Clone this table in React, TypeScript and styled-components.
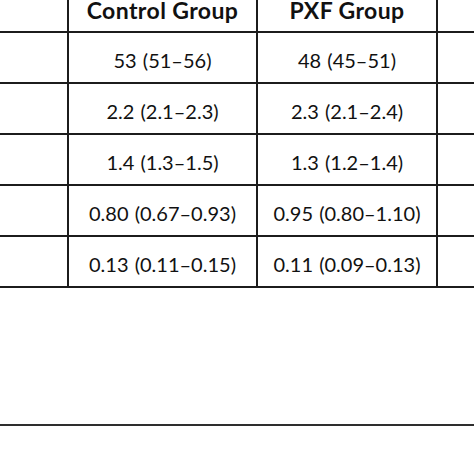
import styled, { createGlobalStyle } from 'styled-components';

const GlobalStyle = createGlobalStyle`
  html, body {
    margin: 0;
    padding: 0;
    background: #ffffff;
    overflow: hidden;
  }
  body {
    font-family: 'Lato', 'Open Sans', sans-serif;
    color: #111111;
  }
`;

const rows = [
  ['53 (51–56)', '48 (45–51)'],
  ['2.2 (2.1–2.3)', '2.3 (2.1–2.4)'],
  ['1.4 (1.3–1.5)', '1.3 (1.2–1.4)'],
  ['0.80 (0.67–0.93)', '0.95 (0.80–1.10)'],
  ['0.13 (0.11–0.15)', '0.11 (0.09–0.13)'],
];

const Page = styled.div`
  width: 474px;
  height: 474px;
  overflow: hidden;
  display: flex;
  flex-direction: column;
`;

const Table = styled.table`
  width: 474px;
  margin-top: -20px;
  border-collapse: collapse;
  table-layout: fixed;
`;

const HeadCell = styled.th<{ $w: number }>`
  width: ${p => p.$w}px;
  height: 52px;
  padding: 0 0 9px 0;
  box-sizing: border-box;
  vertical-align: bottom;
  text-align: center;
  font-size: 23px;
  font-weight: 700;
  letter-spacing: 0.4px;
  line-height: 24px;
  border-bottom: 2px solid #1c1c1c;
  border-left: 2px solid #1c1c1c;
  &:first-child { border-left: none; }
`;

const Cell = styled.td`
  height: 51px;
  padding: 4px 0 0 0;
  box-sizing: border-box;
  text-align: center;
  vertical-align: middle;
  font-size: 20px;
  word-spacing: 1px;
  line-height: 22px;
  white-space: nowrap;
  border-bottom: 2px solid #1c1c1c;
  border-left: 2px solid #1c1c1c;
  &:first-child { border-left: none; }
`;

const Rule = styled.div`
  margin-top: 136px;
  height: 2px;
  background: #2e2e2e;
`;

export default function App() {
  return (
    <Page>
      <GlobalStyle />
      <Table>
        <thead>
          <tr>
            <HeadCell $w={68} />
            <HeadCell $w={189}>Control Group</HeadCell>
            <HeadCell $w={180}>PXF Group</HeadCell>
            <HeadCell $w={37} />
          </tr>
        </thead>
        <tbody>
          {rows.map((r, i) => (
            <tr key={i}>
              <Cell />
              <Cell>{r[0]}</Cell>
              <Cell>{r[1]}</Cell>
              <Cell />
            </tr>
          ))}
        </tbody>
      </Table>
      <Rule />
    </Page>
  );
}
